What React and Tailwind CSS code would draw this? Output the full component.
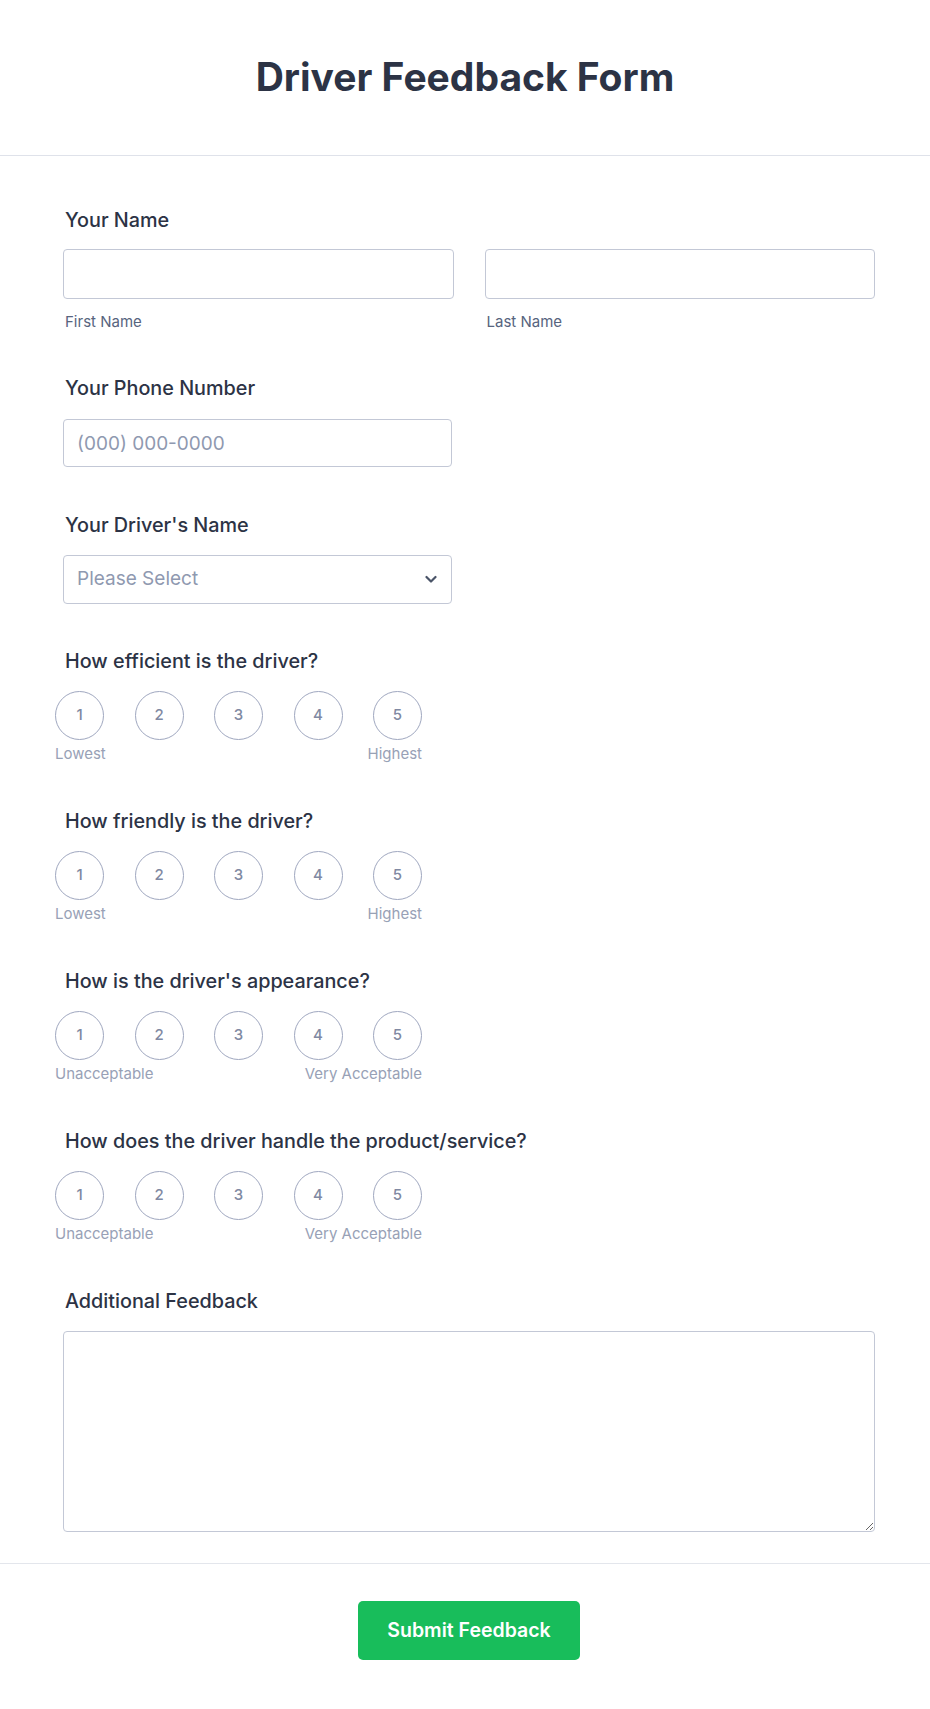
import React from "react";

function Rating({ low, high }) {
  return (
    <div className="ml-[-8px] w-[367px]">
      <div className="mt-[18px] flex gap-[30.5px]">
        {[1, 2, 3, 4, 5].map((n) => (
          <button
            key={n}
            type="button"
            className="flex h-[49px] w-[49px] items-center justify-center rounded-full border border-[#9fa7bf] bg-white text-[15px] font-medium text-[#8089a2]"
          >
            {n}
          </button>
        ))}
      </div>
      <div className="mt-[5px] flex justify-between text-[15px] leading-[18px] text-[#98a1b6]">
        <span>{low}</span>
        <span>{high}</span>
      </div>
    </div>
  );
}

function Label({ children, className = "" }) {
  return (
    <div className={"pl-[2px] text-[19.8px] font-medium leading-6 text-[#2c3345] " + className}>
      {children}
    </div>
  );
}

export default function App() {
  return (
    <div
      className="min-h-[1709px] w-full bg-white"
      style={{ fontFamily: "Inter, 'Noto Sans', Arial, sans-serif" }}
    >
      <header className="border-b border-[#dfe2ea] pt-[53px] pb-[55px]">
        <h1 className="text-center text-[39px] font-bold leading-[47px] text-[#2c3345]">
          Driver Feedback Form
        </h1>
      </header>

      <form className="pl-[63px] pr-[55px] pt-[52px] pb-[31px]">
        <Label>Your Name</Label>
        <div className="mt-[17px] grid grid-cols-2 gap-[31px]">
          <div>
            <input
              type="text"
              className="h-[50px] w-full rounded-[4px] border border-[#c3c8d6] px-[14px] text-[19px] outline-none"
            />
            <div className="mt-[14px] pl-[2px] text-[15px] leading-[18px] text-[#57647e]">First Name</div>
          </div>
          <div>
            <input
              type="text"
              className="h-[50px] w-full rounded-[4px] border border-[#c3c8d6] px-[14px] text-[19px] outline-none"
            />
            <div className="mt-[14px] pl-[2px] text-[15px] leading-[18px] text-[#57647e]">Last Name</div>
          </div>
        </div>

        <Label className="mt-[45px]">Your Phone Number</Label>
        <input
          type="text"
          placeholder="(000) 000-0000"
          className="mt-[19px] block h-[48px] w-[389px] rounded-[4px] border border-[#c3c8d6] px-[13px] text-[19px] text-[#2c3345] outline-none placeholder:text-[#8f99b0]"
        />

        <Label className="mt-[46px]">Your Driver's Name</Label>
        <div className="relative mt-[18px] w-[389px]">
          <select
            defaultValue=""
            className="block h-[49px] w-full appearance-none rounded-[4px] border border-[#c3c8d6] bg-white px-[13px] text-[19px] text-[#8f99b0] outline-none"
          >
            <option value="">Please Select</option>
          </select>
          <svg
            className="pointer-events-none absolute right-[15px] top-[20px]"
            width="12"
            height="9"
            viewBox="0 0 12 9"
            fill="none"
          >
            <path d="M1.5 2l4.5 4.5L10.5 2" stroke="#4a5468" strokeWidth="2.2" strokeLinecap="round" strokeLinejoin="round" />
          </svg>
        </div>

        <Label className="mt-[45px]">How efficient is the driver?</Label>
        <Rating low="Lowest" high="Highest" />

        <Label className="mt-[46px]">How friendly is the driver?</Label>
        <Rating low="Lowest" high="Highest" />

        <Label className="mt-[46px]">How is the driver's appearance?</Label>
        <Rating low="Unacceptable" high="Very Acceptable" />

        <Label className="mt-[46px]">How does the driver handle the product/service?</Label>
        <Rating low="Unacceptable" high="Very Acceptable" />

        <Label className="mt-[46px]">Additional Feedback</Label>
        <textarea className="mt-[18px] block h-[201px] w-full rounded-[4px] border border-[#c3c8d6] p-[13px] text-[19px] outline-none" />
      </form>

      <div className="border-t border-[#e3e6ec] pl-[63px] pr-[55px] pt-[37px] pb-[50px]">
        <div className="flex justify-center">
          <button
            type="button"
            className="h-[59px] w-[222px] rounded-[5px] bg-[#18bd5b] text-[19.5px] font-semibold text-white"
          >
            Submit Feedback
          </button>
        </div>
      </div>
    </div>
  );
}
